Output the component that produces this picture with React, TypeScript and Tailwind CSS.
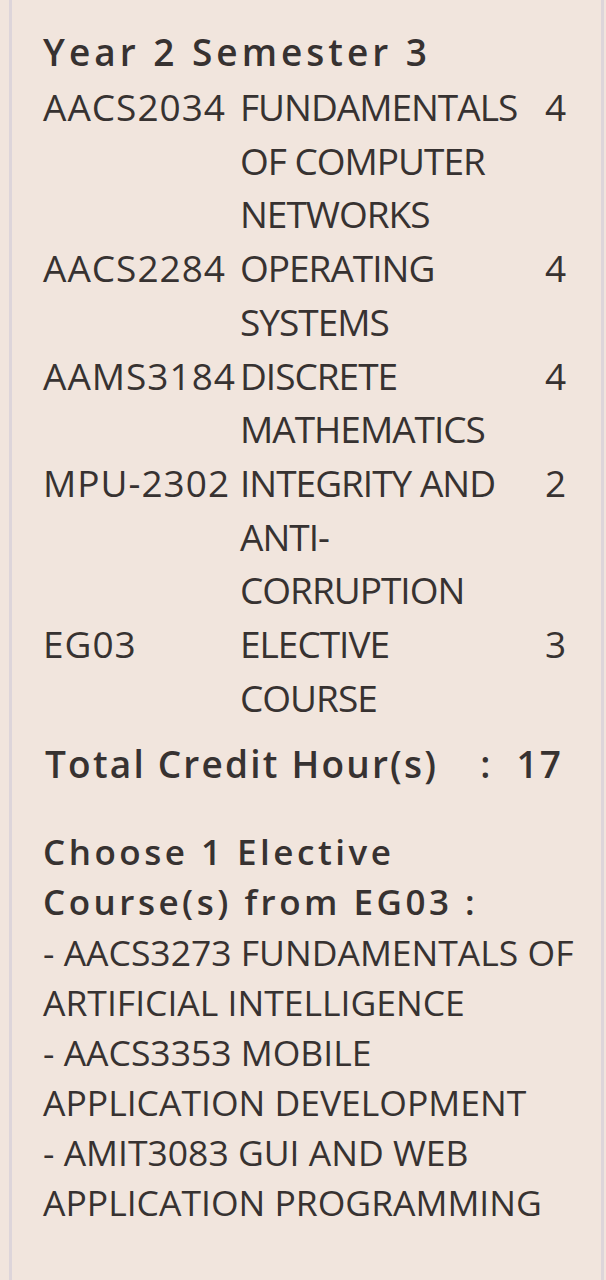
const courses = [
  { code: "AACS2034", title: "FUNDAMENTALS OF COMPUTER NETWORKS", credit: "4" },
  { code: "AACS2284", title: "OPERATING SYSTEMS", credit: "4" },
  { code: "AAMS3184", title: "DISCRETE MATHEMATICS", credit: "4" },
  { code: "MPU-2302", title: "INTEGRITY AND ANTI-CORRUPTION", credit: "2" },
  { code: "EG03", title: "ELECTIVE COURSE", credit: "3" },
];

const electives = [
  "- AACS3273 FUNDAMENTALS OF ARTIFICIAL INTELLIGENCE",
  "- AACS3353 MOBILE APPLICATION DEVELOPMENT",
  "- AMIT3083 GUI AND WEB APPLICATION PROGRAMMING",
];

export default function App() {
  return (
    <div
      className="min-h-[1280px] w-[606px] bg-[#f1e5dd] pl-[9px] text-[#373231]"
      style={{ fontFamily: '"Open Sans", "Noto Sans", sans-serif' }}
    >
      <div className="min-h-[1280px] w-[595px] border-l-[3px] border-r-[3px] border-[#ddd5da] pl-[31px] pt-[26px]">
        <h2 className="text-[37px] font-semibold leading-[52px] tracking-[4px]">
          Year 2 Semester 3
        </h2>

        <div className="mt-[2px] grid grid-cols-[197px_285px_1fr] text-[37px] font-normal leading-[53.7px]">
          {courses.map((c) => (
            <div key={c.code} className="contents">
              <div className="whitespace-nowrap tracking-[1px]">{c.code}</div>
              <div className="tracking-[-1px]">{c.title}</div>
              <div className="pl-5">{c.credit}</div>
            </div>
          ))}
        </div>

        <div className="mt-[14px] flex pl-[2px] text-[37px] font-semibold leading-[52px] tracking-[2.2px]">
          <span>Total Credit Hour(s)</span>
          <span className="ml-[42px]">:</span>
          <span className="ml-[24px]">17</span>
        </div>

        <div className="mt-[37px] w-[470px] text-[35px] font-semibold leading-[50px] tracking-[3.5px]">
          Choose 1 Elective Course(s) from EG03 :
        </div>

        <div className="w-[545px] text-[35.5px] font-normal leading-[50px]">
          {electives.map((e) => (
            <p key={e}>{e}</p>
          ))}
        </div>
      </div>
    </div>
  );
}
